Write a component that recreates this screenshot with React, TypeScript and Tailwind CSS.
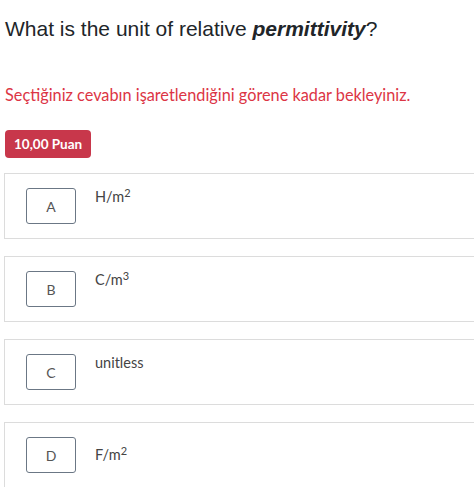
const options = [
  { letter: 'A', base: 'H/m', sup: '2' },
  { letter: 'B', base: 'C/m', sup: '3' },
  { letter: 'C', base: 'unitless', sup: '' },
  { letter: 'D', base: 'F/m', sup: '2', centered: true },
]

export default function App() {
  return (
    <div className="w-[474px] h-[487px] overflow-hidden bg-white pl-[4px]">
      {/* Question */}
      <h1 className="pt-[14px] pl-[1px] text-[21px] leading-[30px] text-[#212529] [font-family:'Liberation_Sans',Arial,sans-serif]">
        What is the unit of relative <b className="italic font-bold">permittivity</b>?
      </h1>

      <p className="mt-[40px] pl-[1px] text-[16.3px] leading-[22px] text-[#dc3545] [font-family:Lato,'Noto_Sans',sans-serif]">
        Seçtiğiniz cevabın işaretlendiğini görene kadar bekleyiniz.
      </p>

      <div className="mt-[24px] ml-[1px] inline-flex items-center h-[28px] px-[9px] rounded-[4px] bg-[#c8374b] text-white text-[13.5px] font-bold [font-family:Lato,'Noto_Sans',sans-serif]">
        10,00 Puan
      </div>

      {/* Options */}
      <div className="mt-[15px] flex flex-col gap-[17px] w-[500px]">
        {options.map((opt) => (
          <div key={opt.letter} className="flex h-[66px] border border-[#dcdcdc] px-[21px] py-[14px]">
            <div className="flex items-center justify-center w-[50px] h-[36px] border border-[#6b7785] rounded-[3px] text-[14px] text-[#555] [font-family:Lato,'Noto_Sans',sans-serif]">
              {opt.letter}
            </div>
            <div
              className={`ml-[19px] text-[14.5px] leading-[18px] text-[#444] [font-family:Lato,'Noto_Sans',sans-serif] ${
                opt.centered ? 'self-center' : ''
              }`}
            >
              {opt.base}
              {opt.sup && <sup className="text-[11px]">{opt.sup}</sup>}
            </div>
          </div>
        ))}
      </div>
    </div>
  )
}
